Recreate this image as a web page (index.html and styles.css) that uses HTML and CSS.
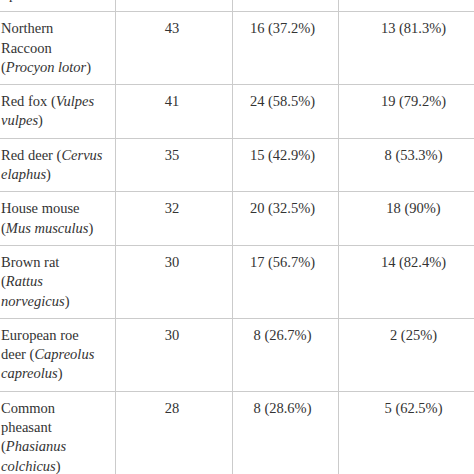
FILE: index.html
```html
<!DOCTYPE html>
<html lang="en">
<head>
<meta charset="utf-8">
<title>Species table</title>
<link rel="stylesheet" href="styles.css">
</head>
<body>
<div class="sheet">
<table class="data">
  <colgroup>
    <col class="c-species">
    <col class="c-n">
    <col class="c-pos">
    <col class="c-conf">
  </colgroup>
  <thead>
    <tr><th>Species</th><th></th><th></th><th></th></tr>
  </thead>
  <tbody>
    <tr><td>Northern Raccoon (<i>Procyon lotor</i>)</td><td>43</td><td>16 (37.2%)</td><td>13 (81.3%)</td></tr>
    <tr><td>Red fox (<i>Vulpes vulpes</i>)</td><td>41</td><td>24 (58.5%)</td><td>19 (79.2%)</td></tr>
    <tr><td>Red deer (<i>Cervus elaphus</i>)</td><td>35</td><td>15 (42.9%)</td><td>8 (53.3%)</td></tr>
    <tr><td>House mouse (<i>Mus musculus</i>)</td><td>32</td><td>20 (32.5%)</td><td>18 (90%)</td></tr>
    <tr><td>Brown rat (<i>Rattus norvegicus</i>)</td><td>30</td><td>17 (56.7%)</td><td>14 (82.4%)</td></tr>
    <tr><td>European roe deer (<i>Capreolus capreolus</i>)</td><td>30</td><td>8 (26.7%)</td><td>2 (25%)</td></tr>
    <tr><td>Common pheasant (<i>Phasianus colchicus</i>)</td><td>28</td><td>8 (28.6%)</td><td>5 (62.5%)</td></tr>
  </tbody>
</table>
</div>
</body>
</html>
```

FILE: styles.css
```css
html, body {
  margin: 0;
  padding: 0;
  background: #ffffff;
  overflow: hidden;
}

.sheet {
  width: 474px;
  height: 474px;
  overflow: hidden;
}

.data {
  margin-top: -23px;
  margin-left: -12px;
  border-collapse: collapse;
  table-layout: fixed;
  width: 500px;
  font-family: "Liberation Serif", "Times New Roman", serif;
  font-size: 14.5px;
  line-height: 19.3px;
  color: #333333;
}

.c-species { width: 127px; }
.c-n { width: 117px; }
.c-pos { width: 106px; }
.c-conf { width: 150px; }

.data th,
.data td {
  border: 1px solid #cbcbcb;
  padding: 7px 11px;
  vertical-align: top;
  text-align: center;
  font-weight: normal;
}

.data td:nth-child(2) {
  padding-left: 8px;
  padding-right: 12px;
}

.data td:nth-child(3) {
  padding-left: 6px;
  padding-right: 12px;
}

.data th:first-child,
.data td:first-child {
  text-align: left;
  padding-left: 12px;
  padding-right: 12px;
}
```
